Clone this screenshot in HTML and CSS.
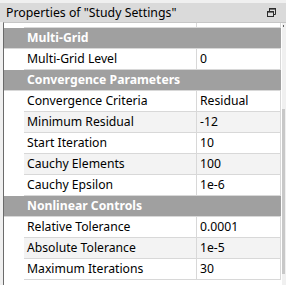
FILE: index.html
```html
<!DOCTYPE html>
<html lang="en">
<head>
    <meta charset="UTF-8">
    <title>Properties</title>
    <link rel="stylesheet" href="styles.css">
</head>
<body>
    <!-- Panel title -->
    <div class="panel-title">
        <span class="title-text">Properties of "Study Settings"</span>
        <svg class="restore-icon" width="9" height="9" viewBox="0 0 9 9">
            <path d="M2.5 3V0.5H8.5V6.5H6.5" fill="none" stroke="#2b2b2b" stroke-width="1"/>
            <rect x="2" y="0" width="7" height="1.6" fill="#2b2b2b"/>
            <rect x="0.5" y="3.5" width="6" height="5" fill="#dadada" stroke="#2b2b2b" stroke-width="1"/>
            <rect x="0" y="3" width="7" height="1.6" fill="#2b2b2b"/>
        </svg>
    </div>

    <!-- Property grid -->
    <div class="panel-body">
        <div class="grid">
            <div class="grid-list">
                <div class="row partial"><div class="name"></div><div class="value"></div></div>

                <div class="section">Multi-Grid</div>
                <div class="row"><div class="name">Multi-Grid Level</div><div class="value">0</div></div>

                <div class="section">Convergence Parameters</div>
                <div class="row"><div class="name">Convergence Criteria</div><div class="value">Residual</div></div>
                <div class="row alt"><div class="name">Minimum Residual</div><div class="value">-12</div></div>
                <div class="row"><div class="name">Start Iteration</div><div class="value">10</div></div>
                <div class="row alt"><div class="name">Cauchy Elements</div><div class="value">100</div></div>
                <div class="row"><div class="name">Cauchy Epsilon</div><div class="value">1e-6</div></div>

                <div class="section">Nonlinear Controls</div>
                <div class="row"><div class="name">Relative Tolerance</div><div class="value">0.0001</div></div>
                <div class="row alt"><div class="name">Absolute Tolerance</div><div class="value">1e-5</div></div>
                <div class="row"><div class="name">Maximum Iterations</div><div class="value">30</div></div>
            </div>
        </div>
        <div class="scrollbar">
            <div class="scroll-arrow"></div>
            <div class="scroll-thumb"></div>
        </div>
    </div>
</body>
</html>
```

FILE: styles.css
```css
/* General */
body {
    margin: 0;
    padding: 0;
    background-color: #f0f0f0;
    font-family: "Noto Sans", Arial, sans-serif;
    font-size: 12.2px;
    color: #000;
    width: 286px;
    height: 285px;
    overflow: hidden;
}

/* Title bar */
.panel-title {
    margin-top: 3px;
    height: 19px;
    background-color: #dadada;
    display: flex;
    align-items: center;
    justify-content: space-between;
    padding: 0 10px 0 6px;
}

.title-text {
    font-size: 12.3px;
    color: #000;
}

.restore-icon {
    display: block;
}

/* Grid body */
.panel-body {
    display: flex;
    margin-left: 3px;
    border-left: 1px solid #6b6b6b;
    border-top: 1px solid #c6c6c6;
    background: #fff;
    height: 262px;
}

.grid {
    width: 277px;
    overflow: hidden;
}

.grid-list {
    margin-top: -16px;
}

.section {
    height: 20px;
    line-height: 20px;
    border-bottom: 1px solid #d8d8d8;
    background-color: #a0a0a0;
    color: #fff;
    font-weight: bold;
    padding-left: 23px;
}

.row {
    display: flex;
    height: 20px;
    line-height: 20px;
    margin-left: 20px;
    border-bottom: 1px solid #d8d8d8;
    border-right: 1px solid #d8d8d8;
    background: #fff;
}

.row.alt {
    background-color: #f3f3f3;
}

.row .name {
    width: 169px;
    padding-left: 3px;
    border-right: 1px solid #d8d8d8;
    white-space: nowrap;
    overflow: hidden;
}

.row .value {
    flex: 1;
    padding-left: 3px;
    white-space: nowrap;
}

/* Scrollbar */
.scrollbar {
    position: relative;
    flex: 1;
    background: #fff;
}

.scrollbar::after {
    content: "";
    position: absolute;
    left: 1px;
    top: 0;
    right: 0;
    bottom: 0;
    background: #f0f0f0;
}

.scroll-arrow {
    position: absolute;
    left: 2px;
    top: 2px;
    width: 1px;
    height: 2px;
    background: #606060;
    z-index: 1;
}

.scroll-thumb {
    position: absolute;
    left: 1px;
    top: 86px;
    width: 3px;
    height: 165px;
    background: #c8c8c8;
    z-index: 1;
}
```
